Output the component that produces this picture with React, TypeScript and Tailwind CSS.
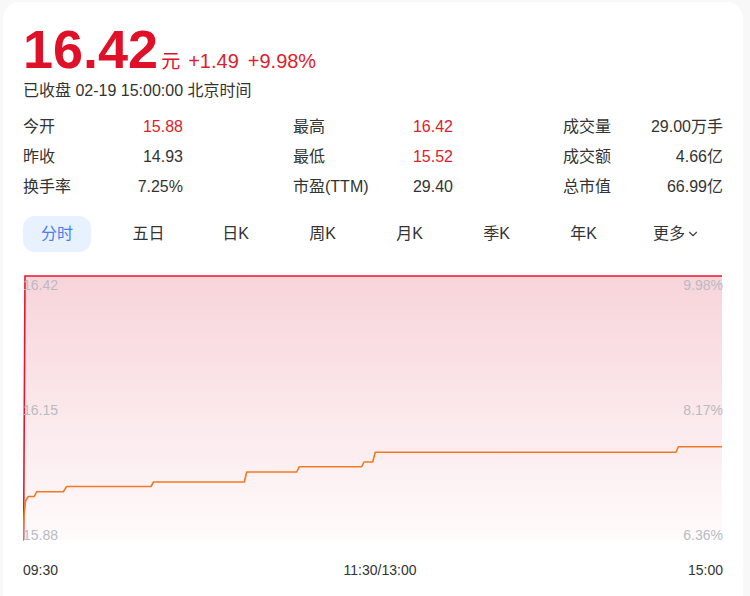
import { ChevronDown } from "lucide-react";

const stats = [
  [
    { label: "今开", value: "15.88", red: true },
    { label: "昨收", value: "14.93" },
    { label: "换手率", value: "7.25%" },
  ],
  [
    { label: "最高", value: "16.42", red: true },
    { label: "最低", value: "15.52", red: true },
    { label: "市盈(TTM)", value: "29.40" },
  ],
  [
    { label: "成交量", value: "29.00万手" },
    { label: "成交额", value: "4.66亿" },
    { label: "总市值", value: "66.99亿" },
  ],
];

const tabs = ["五日", "日K", "周K", "月K", "季K", "年K"];

// average price line, chart coords (699 x 270)
const avgPoints = [
  [0, 267], [0.8, 245], [2.5, 227], [5.3, 222.5], [11.3, 222.5], [13.7, 217.7],
  [40.3, 217.7], [43.7, 212.5], [128, 212.5], [130.5, 208], [221.3, 208],
  [223.7, 198], [273.7, 198], [276.3, 192.7], [338.7, 192.7], [341, 188],
  [349.7, 188], [352.3, 178.3], [653, 178.3], [655.3, 172.7], [699, 172.7],
];

function Chart() {
  const avg = avgPoints.map(([x, y], i) => `${i ? "L" : "M"}${x},${y}`).join(" ");
  return (
    <div className="relative mt-[22px] h-[270px]">
      <svg width="699" height="270" viewBox="0 0 699 270" className="block">
        <defs>
          <linearGradient id="area" x1="0" y1="0" x2="0" y2="1">
            <stop offset="0" stopColor="#f7d4da" />
            <stop offset="1" stopColor="#fffbfb" />
          </linearGradient>
        </defs>
        <path d="M0,266 L2,2 L699,2 L699,266 Z" fill="url(#area)" />
        <path d="M0.6,266 L2,2 L699,2" fill="none" stroke="#e3162f" strokeWidth="1.6" />
        <path d={avg} fill="none" stroke="#f07a24" strokeWidth="1.6" strokeLinejoin="round" />
      </svg>
      <div className="absolute inset-0 flex flex-col justify-between pt-[2px] text-[14px] leading-[18px] text-[#b8bbc3]">
        <div className="flex justify-between">
          <span>16.42</span>
          <span>9.98%</span>
        </div>
        <div className="flex justify-between">
          <span>16.15</span>
          <span>8.17%</span>
        </div>
        <div className="flex justify-between">
          <span>15.88</span>
          <span>6.36%</span>
        </div>
      </div>
    </div>
  );
}

export default function App() {
  return (
    <div
      className="min-h-[596px] bg-[#f8f8f8] pt-[2px] pl-[3px]"
      style={{ fontFamily: `"Liberation Sans", "Noto Sans CJK SC", sans-serif` }}
    >
      <div className="w-[740px] h-[620px] rounded-2xl bg-white px-5 pt-[20px]">
        <div className="flex items-baseline h-[54px] leading-[54px]">
          <span className="text-[54px] font-bold text-[#de1129]">16.42</span>
          <span className="ml-[3px] text-[19px] text-[#de1129]">元</span>
          <span className="ml-[8px] text-[20px] text-[#e0202c]">+1.49</span>
          <span className="ml-[9px] text-[20px] text-[#e0202c]">+9.98%</span>
        </div>
        <div className="mt-[3px] text-[16px] leading-[24px] text-[#333]">
          已收盘 02-19 15:00:00 北京时间
        </div>

        <div className="mt-[9px] flex justify-between">
          {stats.map((col, ci) => (
            <div key={ci} className="w-[160px]">
              {col.map((s) => (
                <div key={s.label} className="flex justify-between h-[30px] items-center text-[16px] text-[#333]">
                  <span>{s.label}</span>
                  <span className={s.red ? "text-[#e0202c]" : ""}>{s.value}</span>
                </div>
              ))}
            </div>
          ))}
        </div>

        <div className="mt-[14px] flex items-center h-[36px] text-[16px] text-[#333]">
          <div className="w-[68px] h-[36px] rounded-xl bg-[#e8f1ff] text-[#4a7ef0] flex items-center justify-center">
            分时
          </div>
          <div className="ml-[14px] flex">
            {tabs.map((t) => (
              <div key={t} className="w-[87px] text-center">
                {t}
              </div>
            ))}
            <div className="w-[87px] flex items-center justify-center pl-[12px]">
              更多
              <ChevronDown size={14} strokeWidth={2} className="ml-[1px] text-[#444]" />
            </div>
          </div>
        </div>

        <Chart />

        <div className="mt-[16px] flex justify-between text-[14px] leading-[20px] text-[#333]">
          <span>09:30</span>
          <span className="ml-[14px]">11:30/13:00</span>
          <span>15:00</span>
        </div>
      </div>
    </div>
  );
}
